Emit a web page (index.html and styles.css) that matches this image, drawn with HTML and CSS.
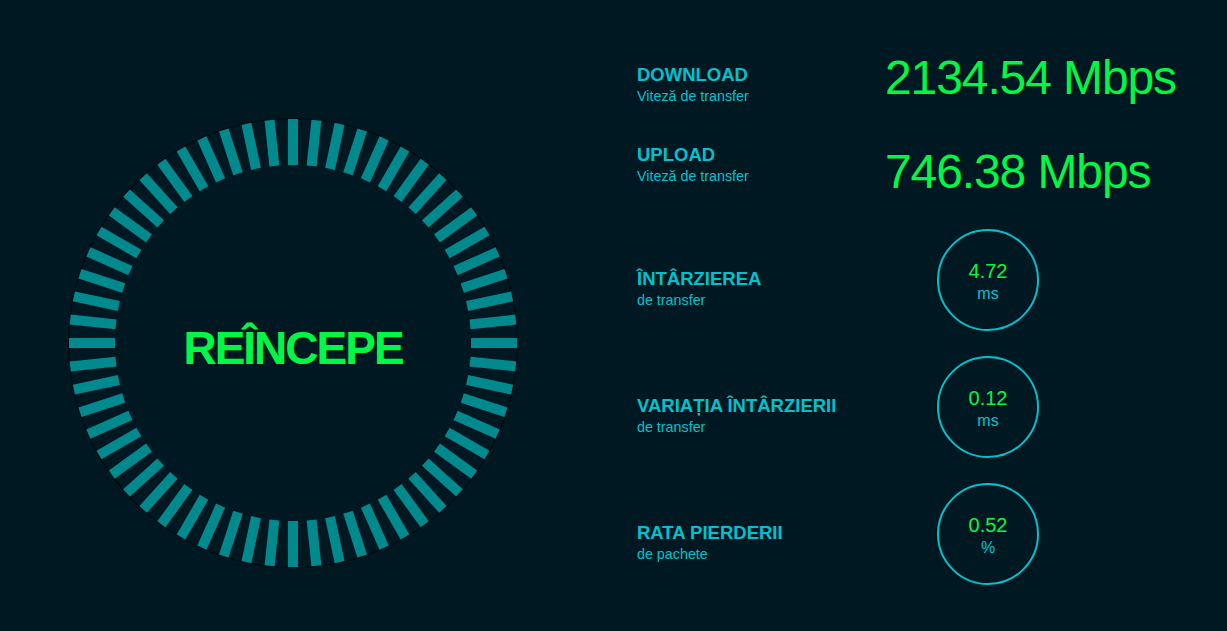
FILE: index.html
```html
<!DOCTYPE html>
<html lang="ro">
<head>
<meta charset="utf-8">
<title>Test viteză</title>
<link rel="stylesheet" href="styles.css">
</head>
<body>
<main class="app">
  <section class="gauge">
    <svg class="ring" viewBox="-225 -225 450 450" width="450" height="450">
      <defs>
        <rect id="t" x="-5" y="-224" width="10" height="46"/>
      </defs>
      <circle cx="0" cy="0" r="224.5" fill="none" stroke="#000c12" stroke-width="1.5" opacity="0.8"/>
      <g fill="#008a8e">
        <use href="#t" transform="rotate(0)"/><use href="#t" transform="rotate(6)"/><use href="#t" transform="rotate(12)"/><use href="#t" transform="rotate(18)"/><use href="#t" transform="rotate(24)"/><use href="#t" transform="rotate(30)"/>
        <use href="#t" transform="rotate(36)"/><use href="#t" transform="rotate(42)"/><use href="#t" transform="rotate(48)"/><use href="#t" transform="rotate(54)"/><use href="#t" transform="rotate(60)"/><use href="#t" transform="rotate(66)"/>
        <use href="#t" transform="rotate(72)"/><use href="#t" transform="rotate(78)"/><use href="#t" transform="rotate(84)"/><use href="#t" transform="rotate(90)"/><use href="#t" transform="rotate(96)"/><use href="#t" transform="rotate(102)"/>
        <use href="#t" transform="rotate(108)"/><use href="#t" transform="rotate(114)"/><use href="#t" transform="rotate(120)"/><use href="#t" transform="rotate(126)"/><use href="#t" transform="rotate(132)"/><use href="#t" transform="rotate(138)"/>
        <use href="#t" transform="rotate(144)"/><use href="#t" transform="rotate(150)"/><use href="#t" transform="rotate(156)"/><use href="#t" transform="rotate(162)"/><use href="#t" transform="rotate(168)"/><use href="#t" transform="rotate(174)"/>
        <use href="#t" transform="rotate(180)"/><use href="#t" transform="rotate(186)"/><use href="#t" transform="rotate(192)"/><use href="#t" transform="rotate(198)"/><use href="#t" transform="rotate(204)"/><use href="#t" transform="rotate(210)"/>
        <use href="#t" transform="rotate(216)"/><use href="#t" transform="rotate(222)"/><use href="#t" transform="rotate(228)"/><use href="#t" transform="rotate(234)"/><use href="#t" transform="rotate(240)"/><use href="#t" transform="rotate(246)"/>
        <use href="#t" transform="rotate(252)"/><use href="#t" transform="rotate(258)"/><use href="#t" transform="rotate(264)"/><use href="#t" transform="rotate(270)"/><use href="#t" transform="rotate(276)"/><use href="#t" transform="rotate(282)"/>
        <use href="#t" transform="rotate(288)"/><use href="#t" transform="rotate(294)"/><use href="#t" transform="rotate(300)"/><use href="#t" transform="rotate(306)"/><use href="#t" transform="rotate(312)"/><use href="#t" transform="rotate(318)"/>
        <use href="#t" transform="rotate(324)"/><use href="#t" transform="rotate(330)"/><use href="#t" transform="rotate(336)"/><use href="#t" transform="rotate(342)"/><use href="#t" transform="rotate(348)"/><use href="#t" transform="rotate(354)"/>
      </g>
    </svg>
    <button class="restart" type="button">REÎNCEPE</button>
  </section>

  <section class="results">
    <div class="speed-row download">
      <div class="label">
        <div class="title">DOWNLOAD</div>
        <div class="sub">Viteză de transfer</div>
      </div>
      <div class="speed">2134.54 Mbps</div>
    </div>
    <div class="speed-row upload">
      <div class="label">
        <div class="title">UPLOAD</div>
        <div class="sub">Viteză de transfer</div>
      </div>
      <div class="speed">746.38 Mbps</div>
    </div>

    <div class="metric-row">
      <div class="label">
        <div class="title">ÎNTÂRZIEREA</div>
        <div class="sub">de transfer</div>
      </div>
      <div class="bubble">
        <div class="value">4.72</div>
        <div class="unit">ms</div>
      </div>
    </div>
    <div class="metric-row">
      <div class="label">
        <div class="title">VARIAȚIA ÎNTÂRZIERII</div>
        <div class="sub">de transfer</div>
      </div>
      <div class="bubble">
        <div class="value">0.12</div>
        <div class="unit">ms</div>
      </div>
    </div>
    <div class="metric-row">
      <div class="label">
        <div class="title">RATA PIERDERII</div>
        <div class="sub">de pachete</div>
      </div>
      <div class="bubble">
        <div class="value">0.52</div>
        <div class="unit">%</div>
      </div>
    </div>
  </section>
</main>
</body>
</html>
```

FILE: styles.css
```css
* { box-sizing: border-box; }

html, body {
  margin: 0;
  padding: 0;
  background: #001821;
  height: 100%;
}

body {
  font-family: "Liberation Sans", Arial, sans-serif;
  color: #00c2cf;
  overflow: hidden;
}

.app {
  display: flex;
  align-items: flex-start;
  padding-left: 68px;
  gap: 119px;
}

.gauge {
  position: relative;
  width: 450px;
  height: 450px;
  margin-top: 118px;
  flex: none;
}

.ring {
  display: block;
}

.restart {
  position: absolute;
  left: 50%;
  top: 50%;
  transform: translate(-50%, -50%);
  margin-top: 5px;
  background: none;
  border: none;
  padding: 0;
  font-family: "Liberation Sans", Arial, sans-serif;
  font-weight: bold;
  font-size: 46px;
  letter-spacing: -2px;
  line-height: 50px;
  color: #00f746;
  white-space: nowrap;
  cursor: pointer;
}

.results {
  padding-top: 54px;
  display: flex;
  flex-direction: column;
}

.speed-row {
  display: flex;
  align-items: flex-start;
}

.speed-row .label {
  width: 248px;
}

.download .label { padding-top: 11px; }
.upload { margin-top: 39px; }
.upload .speed { margin-top: 3px; }

.title {
  font-weight: bold;
  font-size: 18.5px;
  line-height: 20px;
  white-space: nowrap;
}

.sub {
  font-size: 14.3px;
  line-height: 20px;
  margin-top: 1px;
  white-space: nowrap;
}

.speed {
  font-size: 48px;
  line-height: 48px;
  letter-spacing: -1.1px;
  color: #00f746;
  white-space: nowrap;
}

.metric-row {
  display: flex;
  align-items: flex-start;
  margin-top: 25px;
}

.upload + .metric-row { margin-top: 33px; }

.metric-row .label {
  width: 300px;
  padding-top: 40px;
}

.bubble {
  width: 102px;
  height: 102px;
  border: 2px solid #00c2cc;
  border-radius: 50%;
  display: flex;
  flex-direction: column;
  align-items: center;
  padding-top: 28px;
  text-align: center;
}

.value {
  font-size: 20px;
  line-height: 24px;
  color: #00f746;
}

.unit {
  font-size: 16px;
  line-height: 20px;
  margin-top: 1px;
  color: #00c2cf;
}
```
